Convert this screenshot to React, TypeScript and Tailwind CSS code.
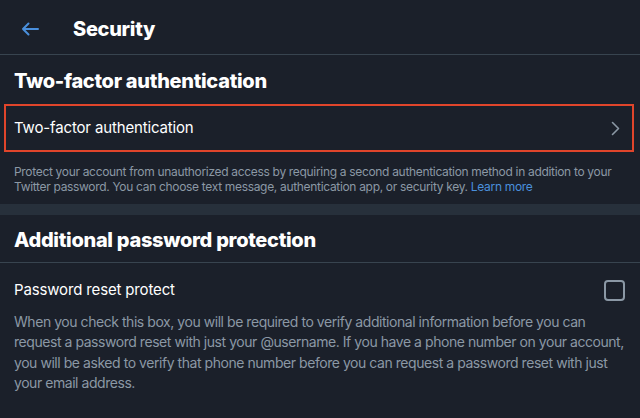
const font = { fontFamily: "Inter, 'Liberation Sans', sans-serif" };

export default function App() {
  return (
    <div className="w-[640px] h-[418px] overflow-hidden bg-[#1b202a] text-white" style={font}>
      {/* Header */}
      <div className="flex items-center h-[55px] pt-[3px] border-b border-[#38444f]">
        <button className="w-[73px] pl-[21px] flex items-center text-[#4a8fdc]">
          <svg width="18" height="14" viewBox="0 0 18 14" fill="none" stroke="currentColor" strokeWidth="2" strokeLinecap="round" strokeLinejoin="round">
            <path d="M17 7H2M7.5 1.5 2 7l5.5 5.5" />
          </svg>
        </button>
        <h1 className="text-[20px] font-extrabold tracking-[-0.3px]">Security</h1>
      </div>

      {/* Two-factor */}
      <h2 className="h-[49px] flex items-center pt-[2px] px-[14px] text-[20px] font-extrabold tracking-[-0.3px]">
        Two-factor authentication
      </h2>
      <div className="ml-[4px] mr-[6px] h-[48px] border-2 border-[#e0452b] flex items-center justify-between pl-[8px] pr-[12px]">
        <span className="text-[15px] tracking-[-0.15px]">Two-factor authentication</span>
        <svg width="9" height="15" viewBox="0 0 9 15" fill="none" stroke="#8b98a5" strokeWidth="1.6" strokeLinecap="round" strokeLinejoin="round">
          <path d="M1.5 1.5 7.5 7.5 1.5 13.5" />
        </svg>
      </div>
      <p className="px-[14px] pt-[12px] pb-[10px] text-[12px] leading-[15px] tracking-[-0.32px] text-[#8b98a5]">
        Protect your account from unauthorized access by requiring a second authentication method in addition to your
        <br />
        Twitter password. You can choose text message, authentication app, or security key.{" "}
        <span className="text-[#4a8fdc]">Learn more</span>
      </p>
      <div className="h-[11px] bg-[#27303b]" />

      {/* Additional password protection */}
      <h2 className="h-[48px] flex items-center pt-[3px] px-[14px] text-[20px] font-extrabold tracking-[-0.3px] border-b border-[#38444f]">
        Additional password protection
      </h2>
      <div className="flex items-center justify-between h-[54px] pl-[14px] pr-[15px]">
        <span className="text-[15px] tracking-[-0.15px]">Password reset protect</span>
        <div className="w-[21px] h-[21px] rounded-[4px] border-2 border-[#8b98a5]" />
      </div>
      <p className="pl-[14px] -mt-[5px] whitespace-nowrap text-[14px] leading-[20.3px] tracking-[-0.45px] text-[#8b98a5]">
        When you check this box, you will be required to verify additional information before you can
        <br />
        request a password reset with just your @username. If you have a phone number on your account,
        <br />
        you will be asked to verify that phone number before you can request a password reset with just
        <br />
        your email address.
      </p>
    </div>
  );
}
